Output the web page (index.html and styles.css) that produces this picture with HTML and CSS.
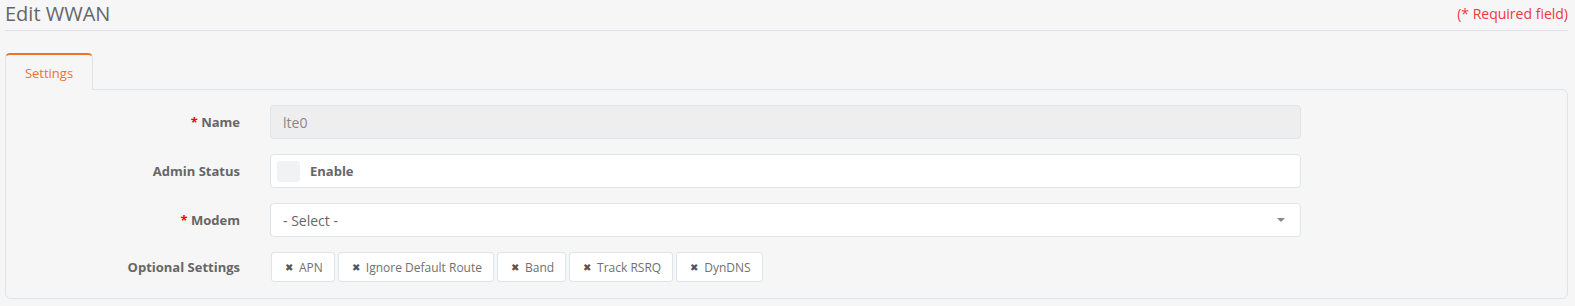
FILE: index.html
```html
<!DOCTYPE html>
<html lang="en">
<head>
  <meta charset="UTF-8" />
  <title>Edit WWAN</title>
  <link rel="stylesheet" href="styles.css">
</head>
<body>
  <header class="page-head">
    <h1>Edit WWAN</h1>
    <span class="req-note">(* Required field)</span>
  </header>

  <div class="tabs">
    <div class="tab active">Settings</div>
  </div>

  <section class="panel">
    <div class="row">
      <label class="lbl"><span class="star">*</span> Name</label>
      <input class="field readonly" type="text" value="lte0" readonly>
    </div>
    <div class="row">
      <label class="lbl">Admin Status</label>
      <div class="field check-field">
        <span class="box"></span>
        <span class="check-text">Enable</span>
      </div>
    </div>
    <div class="row">
      <label class="lbl"><span class="star">*</span> Modem</label>
      <div class="field select-field">
        <span>- Select -</span>
        <span class="caret"></span>
      </div>
    </div>
    <div class="row">
      <label class="lbl">Optional Settings</label>
      <div class="tags">
        <button class="tag"><span class="x">&#10006;</span>APN</button>
        <button class="tag"><span class="x">&#10006;</span>Ignore Default Route</button>
        <button class="tag"><span class="x">&#10006;</span>Band</button>
        <button class="tag"><span class="x">&#10006;</span>Track RSRQ</button>
        <button class="tag"><span class="x">&#10006;</span>DynDNS</button>
      </div>
    </div>
  </section>
</body>
</html>
```

FILE: styles.css
```css
body {
  font-family: 'Open Sans', 'Noto Sans', sans-serif;
  margin: 0;
  padding: 0 7px 0 5px;
  background: #f6f6f6;
  color: #666;
  font-size: 13px;
}
.page-head {
  display: flex;
  justify-content: space-between;
  align-items: flex-end;
  height: 30px;
  border-bottom: 1px solid #dfe3e8;
}
.page-head h1 {
  margin: 0 0 3px 0;
  font-size: 20px;
  font-weight: 400;
  line-height: 26px;
  color: #666;
}
.req-note {
  color: #f2353f;
  font-size: 14px;
  margin-bottom: 7px;
}
.tabs {
  display: flex;
  margin-top: 22px;
}
.tab {
  width: 86px;
  height: 35px;
  line-height: 36px;
  text-align: center;
  border: 1px solid #dde4ec;
  border-top: 2px solid #f47124;
  border-bottom: none;
  border-radius: 5px 5px 0 0;
  color: #f47124;
  background: #f6f6f6;
  margin-bottom: -1px;
  position: relative;
}
.panel {
  border: 1px solid #dde4ec;
  border-radius: 0 6px 6px 6px;
  padding: 15px 0 16px 0;
  display: flex;
  flex-direction: column;
  gap: 15px;
}
.row {
  display: grid;
  grid-template-columns: 234px 1031px;
  column-gap: 30px;
  align-items: center;
}
.lbl {
  text-align: right;
  font-weight: 700;
  color: #666;
}
.star {
  color: #f00;
}
.field {
  box-sizing: border-box;
  height: 34px;
  border: 1px solid #dde4ec;
  border-radius: 4px;
  background: #fff;
  font-family: inherit;
  font-size: 14px;
  color: #666;
  padding: 0 12px;
  display: flex;
  align-items: center;
  margin: 0;
}
.readonly {
  background: #eeeeef;
  color: #888;
  outline: none;
}
.check-field {
  padding-left: 6px;
  font-size: 13px;
}
.box {
  width: 23px;
  height: 21px;
  background: #f1f2f4;
  border-radius: 3px;
  margin-right: 10px;
}
.check-text {
  font-weight: 700;
  color: #666;
}
.select-field {
  justify-content: space-between;
}
.caret {
  width: 0;
  height: 0;
  border-left: 4px solid transparent;
  border-right: 4px solid transparent;
  border-top: 4px solid #888;
  margin-right: 3px;
}
.tags {
  display: flex;
  gap: 3px;
  padding-left: 1px;
}
.tag {
  height: 30px;
  border: 1px solid #dde4ec;
  border-radius: 3px;
  background: #fff;
  font-family: inherit;
  font-size: 12px;
  color: #707070;
  padding: 0 11px 0 13px;
  display: flex;
  align-items: center;
}
.tag .x {
  font-size: 10px;
  margin-right: 6px;
  color: #555;
}
```
